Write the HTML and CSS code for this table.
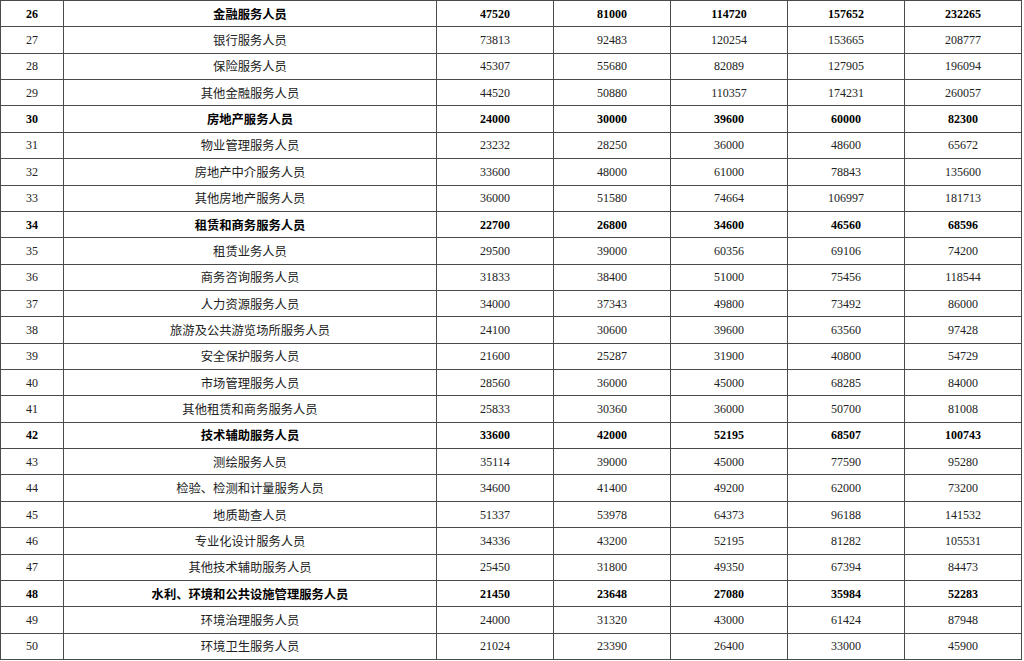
FILE: index.html
```html
<!DOCTYPE html>
<html lang="zh-CN">
<head>
<meta charset="utf-8">
<title>工资指导价位</title>
<link rel="stylesheet" href="styles.css">
</head>
<body>
<table class="wage">
<colgroup>
<col class="c-no"><col class="c-name"><col class="c-num"><col class="c-num"><col class="c-num"><col class="c-num"><col class="c-num">
</colgroup>
<tbody>
<tr class="grp"><td>26</td><td class="name">金融服务人员</td><td>47520</td><td>81000</td><td>114720</td><td>157652</td><td>232265</td></tr>
<tr><td>27</td><td class="name">银行服务人员</td><td>73813</td><td>92483</td><td>120254</td><td>153665</td><td>208777</td></tr>
<tr><td>28</td><td class="name">保险服务人员</td><td>45307</td><td>55680</td><td>82089</td><td>127905</td><td>196094</td></tr>
<tr><td>29</td><td class="name">其他金融服务人员</td><td>44520</td><td>50880</td><td>110357</td><td>174231</td><td>260057</td></tr>
<tr class="grp"><td>30</td><td class="name">房地产服务人员</td><td>24000</td><td>30000</td><td>39600</td><td>60000</td><td>82300</td></tr>
<tr><td>31</td><td class="name">物业管理服务人员</td><td>23232</td><td>28250</td><td>36000</td><td>48600</td><td>65672</td></tr>
<tr><td>32</td><td class="name">房地产中介服务人员</td><td>33600</td><td>48000</td><td>61000</td><td>78843</td><td>135600</td></tr>
<tr><td>33</td><td class="name">其他房地产服务人员</td><td>36000</td><td>51580</td><td>74664</td><td>106997</td><td>181713</td></tr>
<tr class="grp"><td>34</td><td class="name">租赁和商务服务人员</td><td>22700</td><td>26800</td><td>34600</td><td>46560</td><td>68596</td></tr>
<tr><td>35</td><td class="name">租赁业务人员</td><td>29500</td><td>39000</td><td>60356</td><td>69106</td><td>74200</td></tr>
<tr><td>36</td><td class="name">商务咨询服务人员</td><td>31833</td><td>38400</td><td>51000</td><td>75456</td><td>118544</td></tr>
<tr><td>37</td><td class="name">人力资源服务人员</td><td>34000</td><td>37343</td><td>49800</td><td>73492</td><td>86000</td></tr>
<tr><td>38</td><td class="name">旅游及公共游览场所服务人员</td><td>24100</td><td>30600</td><td>39600</td><td>63560</td><td>97428</td></tr>
<tr><td>39</td><td class="name">安全保护服务人员</td><td>21600</td><td>25287</td><td>31900</td><td>40800</td><td>54729</td></tr>
<tr><td>40</td><td class="name">市场管理服务人员</td><td>28560</td><td>36000</td><td>45000</td><td>68285</td><td>84000</td></tr>
<tr><td>41</td><td class="name">其他租赁和商务服务人员</td><td>25833</td><td>30360</td><td>36000</td><td>50700</td><td>81008</td></tr>
<tr class="grp"><td>42</td><td class="name">技术辅助服务人员</td><td>33600</td><td>42000</td><td>52195</td><td>68507</td><td>100743</td></tr>
<tr><td>43</td><td class="name">测绘服务人员</td><td>35114</td><td>39000</td><td>45000</td><td>77590</td><td>95280</td></tr>
<tr><td>44</td><td class="name">检验、检测和计量服务人员</td><td>34600</td><td>41400</td><td>49200</td><td>62000</td><td>73200</td></tr>
<tr><td>45</td><td class="name">地质勘查人员</td><td>51337</td><td>53978</td><td>64373</td><td>96188</td><td>141532</td></tr>
<tr><td>46</td><td class="name">专业化设计服务人员</td><td>34336</td><td>43200</td><td>52195</td><td>81282</td><td>105531</td></tr>
<tr><td>47</td><td class="name">其他技术辅助服务人员</td><td>25450</td><td>31800</td><td>49350</td><td>67394</td><td>84473</td></tr>
<tr class="grp"><td>48</td><td class="name">水利、环境和公共设施管理服务人员</td><td>21450</td><td>23648</td><td>27080</td><td>35984</td><td>52283</td></tr>
<tr><td>49</td><td class="name">环境治理服务人员</td><td>24000</td><td>31320</td><td>43000</td><td>61424</td><td>87948</td></tr>
<tr><td>50</td><td class="name">环境卫生服务人员</td><td>21024</td><td>23390</td><td>26400</td><td>33000</td><td>45900</td></tr>
</tbody>
</table>
</body>
</html>
```

FILE: styles.css
```css
html, body {
  margin: 0;
  padding: 0;
  background: #ffffff;
}

.wage {
  border-collapse: collapse;
  table-layout: fixed;
  width: 1022px;
  font-family: "Liberation Serif", "Times New Roman", serif;
  font-size: 12px;
  color: #222222;
}

.c-no { width: 63px; }
.c-name { width: 373px; }
.c-num { width: 117px; }

.wage td {
  border: 1px solid #4a4a4a;
  height: 25.36px;
  padding: 0;
  text-align: center;
  vertical-align: middle;
  line-height: 14px;
}

.wage td.name {
  font-family: "Noto Sans CJK SC", "Noto Sans", sans-serif;
  font-size: 12.3px;
}

.wage tr.grp td {
  font-weight: bold;
  color: #000000;
}
```
